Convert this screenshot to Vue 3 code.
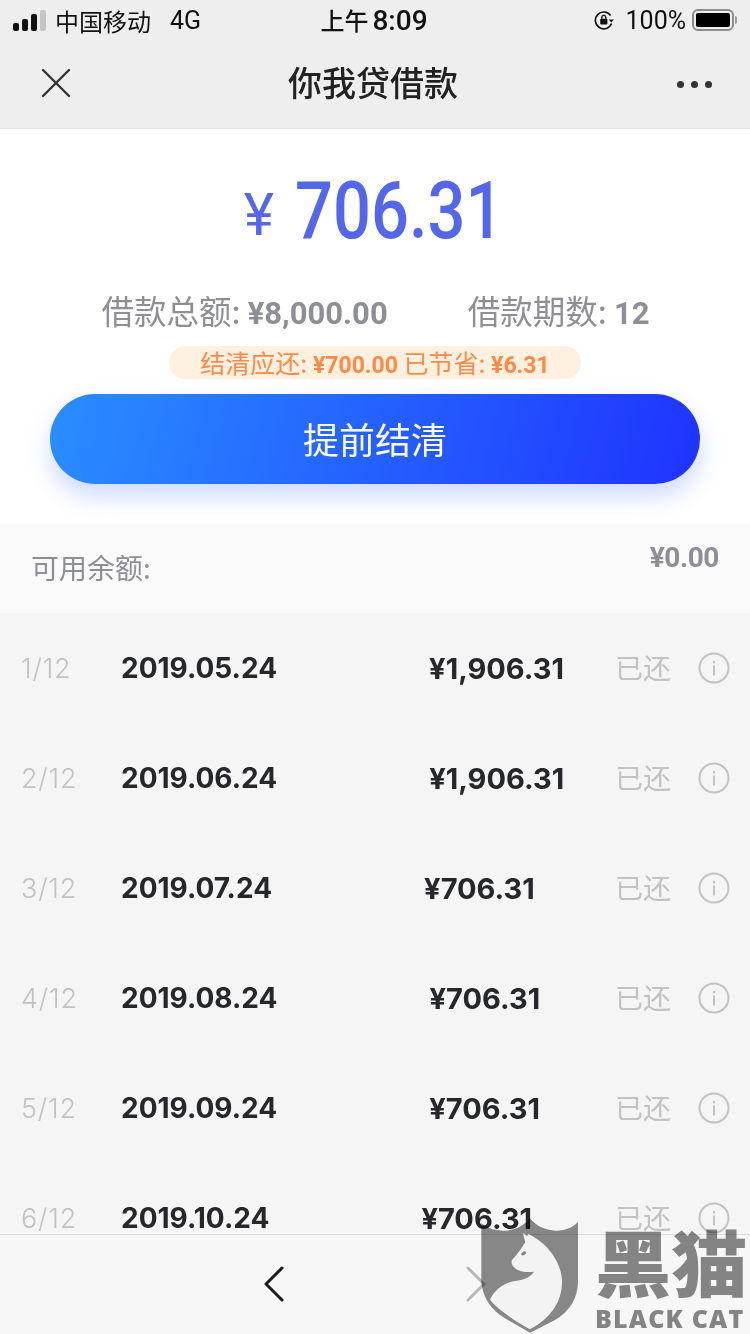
<script setup>
const rows = [
  { n: '1/12', d: '2019.05.24', a: '¥1,906.31' },
  { n: '2/12', d: '2019.06.24', a: '¥1,906.31' },
  { n: '3/12', d: '2019.07.24', a: '¥706.31' },
  { n: '4/12', d: '2019.08.24', a: '¥706.31' },
  { n: '5/12', d: '2019.09.24', a: '¥706.31' },
  { n: '6/12', d: '2019.10.24', a: '¥706.31' },
]
</script>

<template>
  <div class="page">
    <header class="top">
      <div class="status">
        <div class="status-left">
          <div class="signal"><i class="b1"></i><i class="b2"></i><i class="b3"></i><i class="b4"></i></div>
          <span class="carrier">中国移动</span>
          <span class="net">4G</span>
        </div>
        <div class="time">上午<span class="clock">8:09</span></div>
        <div class="status-right">
          <svg class="lock" width="20" height="20" viewBox="0 0 20 20">
            <path d="M16.6 5.5A8.4 8.4 0 1 0 17.6 13.5" fill="none" stroke="#111" stroke-width="1.6"/>
            <path d="M14.8 9.5h5l-2.5 3z" fill="#111"/>
            <rect x="6.2" y="8.8" width="7.2" height="5.6" rx="1" fill="#111"/>
            <path d="M7.8 9V7.4a2 2 0 0 1 4 0V9" fill="none" stroke="#111" stroke-width="1.3"/>
          </svg>
          <span class="pct">100%</span>
          <div class="battery"><div class="fill"></div></div>
          <div class="nub"></div>
        </div>
      </div>
      <div class="nav">
        <svg class="close" width="30" height="30" viewBox="0 0 30 30">
          <path d="M2 2L28 28M28 2L2 28" stroke="#333" stroke-width="2.4" stroke-linecap="round"/>
        </svg>
        <div class="title">你我贷借款</div>
        <div class="dots"><i></i><i></i><i></i></div>
      </div>
    </header>

    <section class="hero">
      <div class="amount">
        <span class="yen">¥</span>
        <span class="big">706.31</span>
      </div>
      <div class="stats">
        <div class="stat">借款总额: <b>¥8,000.00</b></div>
        <div class="stat">借款期数: <b>12</b></div>
      </div>
      <div class="pill">结清应还: <b>¥700.00</b> 已节省: <b>¥6.31</b></div>
      <button class="repay">提前结清</button>
    </section>

    <section class="balance">
      <span class="bal-label">可用余额:</span>
      <b class="bal-value">¥0.00</b>
    </section>

    <section class="list">
      <div v-for="r in rows" :key="r.n" class="row">
        <span class="no">{{ r.n }}</span>
        <span class="date">{{ r.d }}</span>
        <span class="money">{{ r.a }}</span>
        <span class="state">已还</span>
        <svg class="info" width="32" height="32" viewBox="0 0 32 32">
          <circle cx="16" cy="16" r="14.5" fill="none" stroke="#c2c2c2" stroke-width="2"/>
          <rect x="15" y="13.5" width="2" height="10" fill="#c2c2c2"/>
          <rect x="15" y="9" width="2" height="2.4" fill="#c2c2c2"/>
        </svg>
      </div>
    </section>

    <footer class="toolbar">
      <svg width="24" height="38" viewBox="0 0 24 38">
        <path d="M20 3L4 19L20 35" fill="none" stroke="#1c1c1c" stroke-width="3" stroke-linecap="round" stroke-linejoin="round"/>
      </svg>
      <svg width="24" height="38" viewBox="0 0 24 38">
        <path d="M4 3L20 19L4 35" fill="none" stroke="#b8b8b8" stroke-width="3" stroke-linecap="round" stroke-linejoin="round"/>
      </svg>
    </footer>

    <div class="mark">
      <svg class="shield" width="120" height="124" viewBox="0 0 360 372">
        <path d="M34 40Q60 62 100 62Q150 62 180 25Q210 62 262 62Q300 62 324 36L324 215Q322 290 255 330L180 368L105 325Q40 285 34 215Z" fill="#8b8b8b"/>
        <path d="M158 68L172 78L175 72C225 95 275 150 276 215C277 270 245 325 180 358C130 330 85 300 60 270C75 235 110 215 140 212C165 208 185 198 192 185C170 188 145 185 135 175C128 168 122 160 126 150C140 135 155 115 166 96Z" fill="#fbfbfb"/>
        <ellipse cx="161" cy="130" rx="8" ry="5" fill="#8b8b8b" transform="rotate(-30 161 130)"/>
      </svg>
      <div class="brand">
        <div class="cn">黑猫</div>
        <div class="en">BLACK CAT</div>
      </div>
    </div>
  </div>
</template>

<style>
html, body { margin: 0; padding: 0; }
</style>

<style scoped>
.page {
  position: relative;
  width: 750px;
  height: 1334px;
  overflow: hidden;
  display: flex;
  flex-direction: column;
  background: #f5f5f5;
  font-family: "Noto Sans CJK SC", "Roboto", sans-serif;
}
.top {
  height: 128px;
  background: #eeeeee;
  border-bottom: 1px solid #e2e2e2;
  flex: none;
}
.status {
  height: 40px;
  display: grid;
  grid-template-columns: 1fr auto 1fr;
  align-items: center;
  padding: 0 13px;
  color: #111;
  font-size: 24px;
}
.status-left, .status-right { display: flex; align-items: center; }
.status-right { justify-content: flex-end; }
.signal { display: flex; align-items: flex-end; gap: 3px; height: 22px; }
.signal i { width: 6px; background: #111; border-radius: 2px; }
.signal .b1 { height: 8px; }
.signal .b2 { height: 12px; }
.signal .b3 { height: 17px; }
.signal .b4 { height: 21px; background: #c5c5c5; }
.carrier { margin-left: 9px; }
.net { margin-left: 19px; font-family: "Roboto", sans-serif; font-size: 25px; }
.time { font-weight: 500; margin-left: -2px; line-height: 36px; }
.clock { font-family: "Roboto", sans-serif; font-size: 28px; margin-left: 4px; }
.pct { margin: 0 6px 0 12px; font-family: "Roboto", sans-serif; font-size: 25px; }
.battery {
  width: 42px;
  height: 22px;
  box-sizing: border-box;
  border: 2px solid #8c8c8c;
  border-radius: 6px;
  padding: 2px;
}
.fill { height: 100%; background: #000; border-radius: 2px; }
.nub { width: 2px; height: 8px; background: #9a9a9a; margin-left: 1px; border-radius: 0 2px 2px 0; }
.nav {
  height: 88px;
  position: relative;
  display: flex;
  align-items: center;
  justify-content: space-between;
  padding: 0 38px 0 41px;
}
.close { margin-top: -2px; }
.title {
  position: absolute;
  left: 0;
  right: 4px;
  top: 18px;
  text-align: center;
  font-size: 34px;
  line-height: 48px;
  font-weight: 500;
  color: #222;
}
.dots { display: flex; gap: 7px; }
.dots i { width: 7px; height: 7px; border-radius: 50%; background: #333; }
.hero {
  height: 395px;
  flex: none;
  background: #fff;
  display: flex;
  flex-direction: column;
  align-items: center;
}
.amount {
  display: flex;
  align-items: flex-end;
  justify-content: center;
  height: 100px;
  margin-top: 26px;
  color: #5467ec;
  font-family: "Roboto", sans-serif;
  margin-left: -10px;
}
.yen {
  font-size: 60px;
  line-height: 80px;
  font-weight: 400;
  transform: scaleX(.96);
}
.big {
  font-size: 80px;
  line-height: 88px;
  font-weight: 500;
  width: 202px;
  margin-left: 21px;
  white-space: nowrap;
  transform: scaleX(.835);
  transform-origin: left center;
}
.stats {
  display: flex;
  gap: 80px;
  margin-top: 31px;
  margin-left: 1px;
  color: #8e8e96;
  font-size: 32.5px;
  line-height: 48px;
}
.stat b { font-family: "Roboto", sans-serif; font-weight: 700; font-size: 31px; }
.pill {
  margin-top: 8px;
  width: 412px;
  height: 33px;
  line-height: 33px;
  border-radius: 17px;
  background: #fff0e0;
  color: #ff8a47;
  font-size: 25px;
  text-align: center;
  white-space: nowrap;
}
.pill b { font-family: "Roboto", sans-serif; font-size: 23px; font-weight: 700; }
.repay {
  margin-top: 15px;
  width: 650px;
  height: 90px;
  border: 0;
  border-radius: 45px;
  padding: 0 0 3px;
  background: linear-gradient(105deg, #2a8eff 0%, #1f33ff 100%);
  box-shadow: 0 12px 24px rgba(50, 100, 255, .24);
  color: #fff;
  font-family: inherit;
  font-size: 36px;
  flex: none;
}
.balance {
  height: 89px;
  flex: none;
  background: #fafafa;
  display: flex;
  justify-content: space-between;
  padding: 0 31px;
  color: #8e8e96;
}
.bal-label { font-size: 28px; line-height: 86px; }
.bal-value { font-family: "Roboto", sans-serif; font-size: 28px; line-height: 68px; font-weight: 700; letter-spacing: -.4px; }
.list { flex: 1; }
.row {
  height: 110px;
  display: flex;
  align-items: center;
  padding: 0 20px 0 21px;
}
.no {
  width: 100px;
  flex: none;
  color: #c2c2c2;
  font-size: 27px;
  letter-spacing: .8px;
  font-family: "Inter", sans-serif;
  font-weight: 300;
}
.date, .money {
  color: #26272b;
  font-family: "Inter", sans-serif;
  font-size: 28px;
  font-weight: 700;
}
.money { margin-left: 152px; font-size: 29px; }
.state { margin-left: auto; margin-top: -2px; color: #c2c2c2; font-size: 28px; }
.info { margin-left: 27px; flex: none; }
.toolbar {
  position: absolute;
  left: 0;
  right: 0;
  bottom: 0;
  height: 98px;
  background: #f7f7f7;
  border-top: 1px solid #dcdcdc;
  display: flex;
  align-items: center;
  justify-content: center;
  gap: 178px;
  padding-bottom: 1px;
}
.mark {
  position: absolute;
  left: 470px;
  top: 1210px;
  display: flex;
  mix-blend-mode: multiply;
}
.shield { flex: none; }
.brand { margin-left: 5px; color: #888; }
.cn {
  margin-top: 12px;
  font-size: 72px;
  line-height: 76px;
  font-weight: 900;
  white-space: nowrap;
  transform: scaleX(1.06);
  transform-origin: left center;
}
.en {
  margin-top: 6px;
  font-family: "Open Sans", sans-serif;
  font-weight: 800;
  font-size: 25px;
  letter-spacing: 1.2px;
  line-height: 28px;
  white-space: nowrap;
}
</style>
